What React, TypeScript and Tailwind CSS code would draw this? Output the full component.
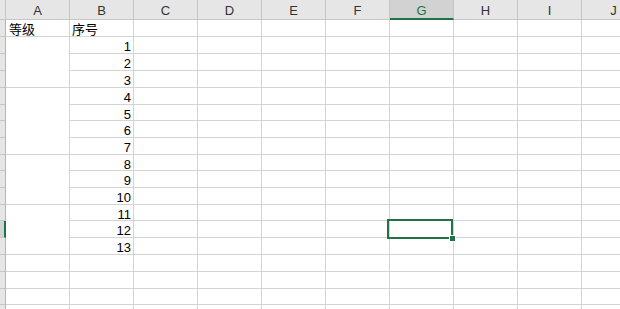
import React from 'react';

const columns = ['A', 'B', 'C', 'D', 'E', 'F', 'G', 'H', 'I', 'J'];

// body rows (excel rows 1..18), heights include the 1px grid line
const rowHeights = [17, 17, 17, 17, 17, 16, 17, 17, 16, 17, 17, 16, 17, 17, 17, 17, 16, 17];

// merged cells in column A: start row -> span
const merges: Record<number, number> = { 2: 3, 5: 4, 9: 3, 12: 3 };
const covered = new Set([3, 4, 6, 7, 8, 10, 11, 13, 14]);

const selectedRow = 13;
const selectedCol = 'G';

const cellValue = (row: number, col: string) => {
  if (row === 1 && col === 'A') return '等级';
  if (row === 1 && col === 'B') return '序号';
  if (col === 'B' && row >= 2 && row <= 14) return String(row - 1);
  return '';
};

export default function App() {
  return (
    <div className="w-[620px] h-[309px] overflow-hidden bg-white font-['Liberation_Sans','Noto_Sans_CJK_SC',sans-serif] text-[13px] text-black select-none">
      <div className="grid grid-cols-[6px_repeat(10,64px)] grid-rows-[20px_17px_17px_17px_17px_17px_16px_17px_17px_16px_17px_17px_16px_17px_17px_17px_17px_16px_17px]">
        {/* corner */}
        <div className="bg-[#e6e6e6] border-r border-b border-[#c6c6c6]" />
        {/* column headers */}
        {columns.map((c) =>
          c === selectedCol ? (
            <div
              key={c}
              className="bg-[#d2d2d2] border-r border-[#c6c6c6] border-b-2 border-b-[#217346] flex items-center justify-center text-[13px] leading-[20px] pt-[3px] text-[#217346]"
            >
              {c}
            </div>
          ) : (
            <div
              key={c}
              className="bg-[#e6e6e6] border-r border-b border-[#c6c6c6] flex items-center justify-center text-[13px] leading-[20px] pt-[3px] text-[#333]"
            >
              {c}
            </div>
          )
        )}

        {rowHeights.map((_, i) => {
          const row = i + 1;
          return (
            <React.Fragment key={row}>
              <div
                className={
                  row === selectedRow
                    ? 'bg-[#d2d2d2] border-b border-[#c6c6c6] border-r-2 border-r-[#217346]'
                    : 'bg-[#e6e6e6] border-b border-[#c6c6c6] border-r border-r-[#b4b4b4]'
                }
              />
              {columns.map((c) => {
                if (c === 'A' && covered.has(row)) return null;
                const span = c === 'A' ? merges[row] : undefined;
                const value = cellValue(row, c);
                const numeric = c === 'B' && row >= 2;
                const selected = row === selectedRow && c === selectedCol;
                return (
                  <div
                    key={c}
                    className={`relative border-r border-b border-[#d4d4d4] flex items-start leading-[16px] pt-[2px] px-[2px] whitespace-nowrap ${
                      numeric ? 'justify-end' : 'justify-start'
                    } ${span === 3 ? 'row-span-3' : ''} ${span === 4 ? 'row-span-4' : ''} ${selected ? 'z-10' : ''}`}
                  >
                    {value && <span className={c === 'A' ? 'pl-px' : ''}>{value}</span>}
                    {selected && (
                      <div className="absolute -left-[3px] -top-[2px] w-[66px] h-[20px] border-2 border-[#217346]">
                        <div className="absolute -right-[5px] -bottom-[5px] w-[7px] h-[7px] bg-[#217346] border border-white" />
                      </div>
                    )}
                  </div>
                );
              })}
            </React.Fragment>
          );
        })}
      </div>
    </div>
  );
}
